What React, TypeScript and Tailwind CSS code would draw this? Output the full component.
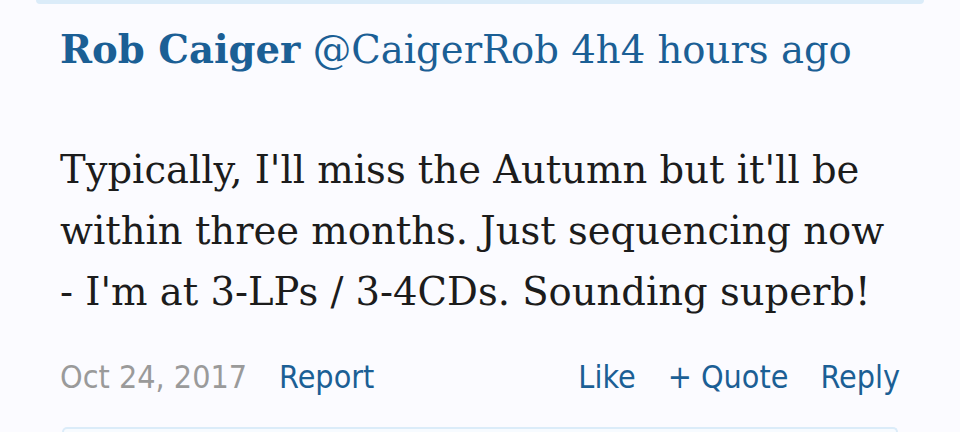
export default function App() {
  return (
    <div className="w-[960px] h-[432px] overflow-hidden bg-[#fbfbff] flex flex-col">
      <div className="mx-[36px] w-[888px] h-[4px] rounded-b-[6px] bg-[#dbecf9]" />
      <div className="px-[60px] flex flex-col">
        <div
          className="mt-[22px] text-[38.6px] leading-[48px] text-[#1b5f95] whitespace-nowrap"
          style={{ fontFamily: '"DejaVu Serif", Georgia, serif' }}
        >
          <span className="font-bold">Rob Caiger</span>{' '}
          <span>@CaigerRob 4h4 hours ago</span>
        </div>
        <p
          className="mt-[65px] text-[38.5px] leading-[61px] text-[#1c1c1c] whitespace-nowrap"
          style={{ fontFamily: '"DejaVu Serif", Georgia, serif' }}
        >
          Typically, I'll miss the Autumn but it'll be
          <br />
          within three months. Just sequencing now
          <br />
          - I'm at 3-LPs / 3-4CDs. Sounding superb!
        </p>
        <div
          className="mt-[35px] flex items-center text-[32px] leading-[40px] whitespace-nowrap"
          style={{ fontFamily: '"DejaVu Sans Condensed", "DejaVu Sans", sans-serif' }}
        >
          <span className="text-[#9a9a9a]">Oct 24, 2017</span>
          <span className="ml-[32px] text-[#1b5f95]">Report</span>
          <div className="ml-auto flex gap-[32px] text-[#1b5f95]">
            <span>Like</span>
            <span>+ Quote</span>
            <span>Reply</span>
          </div>
        </div>
      </div>
      <div className="mt-auto mx-[62px] h-[5px] rounded-t-[8px] border-2 border-b-0 border-[#dbecf9] bg-[#f7fbff]" />
    </div>
  );
}
